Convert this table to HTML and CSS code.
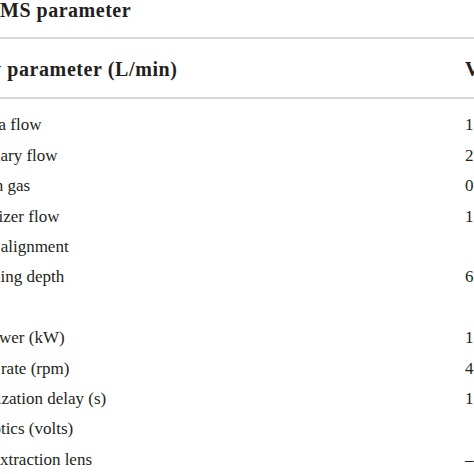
FILE: index.html
```html
<!DOCTYPE html>
<html>
<head>
<meta charset="utf-8">
<link rel="stylesheet" href="styles.css">
</head>
<body>
<div class="sheet">
  <div class="title">ICP-MS parameter</div>
  <div class="head">
    <div class="cell">Flow parameter (L/min)</div>
    <div class="cell">Value</div>
  </div>
  <div class="rows">
    <div class="row"><div class="cell">Plasma flow</div><div class="cell">15</div></div>
    <div class="row"><div class="cell">Auxiliary flow</div><div class="cell">2</div></div>
    <div class="row"><div class="cell">Sheath gas</div><div class="cell">0.2</div></div>
    <div class="row"><div class="cell">Nebulizer flow</div><div class="cell">1.04</div></div>
    <div class="row"><div class="cell">Torch alignment</div><div class="cell"></div></div>
    <div class="row"><div class="cell">Sampling depth</div><div class="cell">6</div></div>
    <div class="row"><div class="cell"></div><div class="cell"></div></div>
    <div class="row"><div class="cell">RF power (kW)</div><div class="cell">1.6</div></div>
    <div class="row"><div class="cell">Pump rate (rpm)</div><div class="cell">40</div></div>
    <div class="row"><div class="cell">Stabilization delay (s)</div><div class="cell">15</div></div>
    <div class="row"><div class="cell">Ion optics (volts)</div><div class="cell"></div></div>
    <div class="row"><div class="cell">First extraction lens</div><div class="cell">–400</div></div>
  </div>
</div>
</body>
</html>
```

FILE: styles.css
```css
html, body {
  margin: 0;
  padding: 0;
  background: #ffffff;
  overflow: hidden;
}

.sheet {
  margin-left: -43px;
  width: 580px;
  font-family: "Liberation Serif", "DejaVu Serif", serif;
  color: #231f20;
}

.title {
  font-family: "Liberation Serif", "DejaVu Serif", serif;
  font-size: 20px;
  line-height: 20px;
  font-weight: bold;
  letter-spacing: 0.5px;
  padding-bottom: 17px;
  border-bottom: 2px solid #d8d8d8;
}

.head {
  display: grid;
  grid-template-columns: 508px 1fr;
  font-family: "Liberation Serif", "DejaVu Serif", serif;
  font-size: 20px;
  line-height: 20px;
  font-weight: bold;
  letter-spacing: 0.6px;
  padding: 19.5px 0 18.5px;
  border-bottom: 2px solid #d6d6d6;
}

.rows {
  padding-top: 11.4px;
  font-family: "Liberation Serif", "DejaVu Serif", serif;
  font-size: 17px;
}

.row {
  display: grid;
  grid-template-columns: 508px 1fr;
  height: 30.4px;
  line-height: 30.4px;
  white-space: nowrap;
}

.cell {
  white-space: nowrap;
}
```
